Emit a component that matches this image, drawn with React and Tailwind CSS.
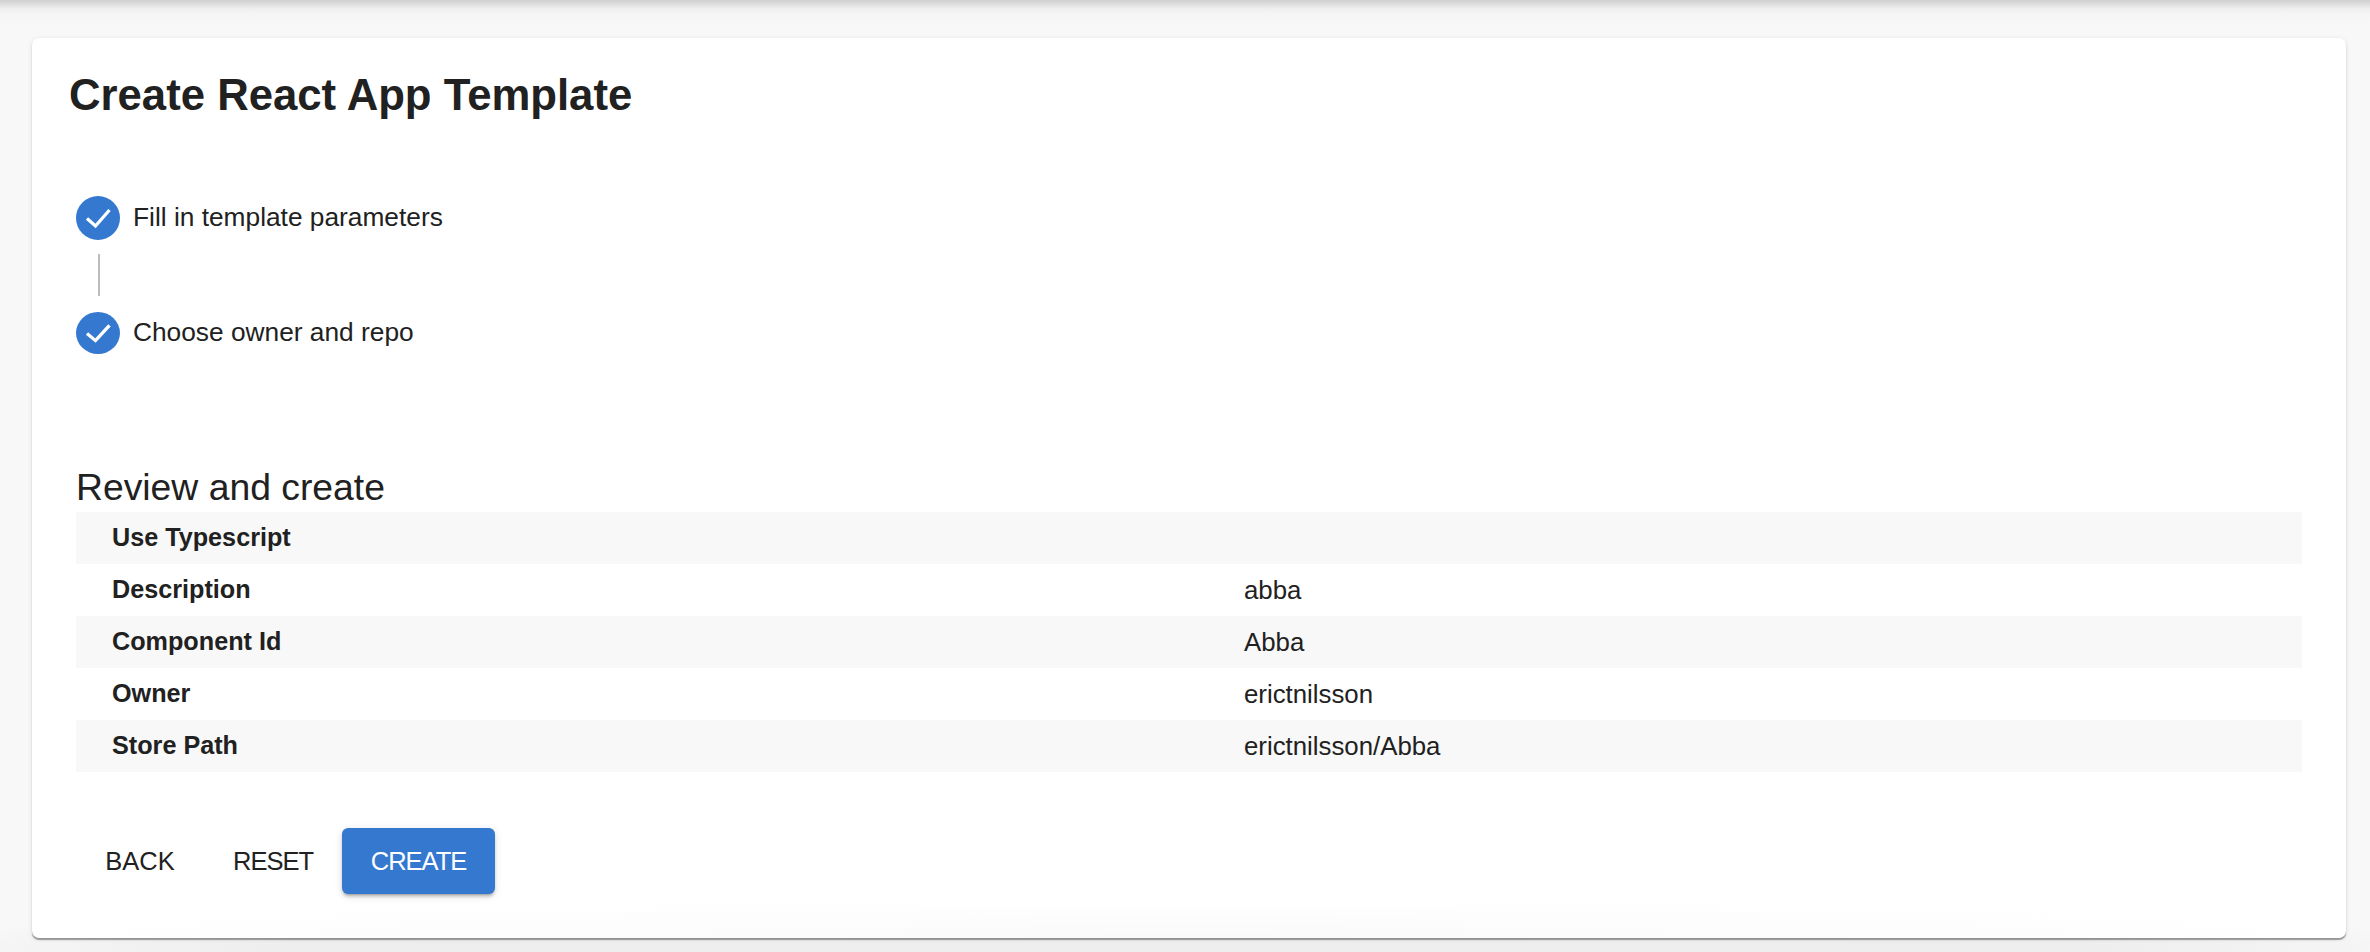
const rows = [
  ['Use Typescript', ''],
  ['Description', 'abba'],
  ['Component Id', 'Abba'],
  ['Owner', 'erictnilsson'],
  ['Store Path', 'erictnilsson/Abba'],
];

const CheckCircle = ({ className }) => (
  <svg className={className} viewBox="0 0 44 44" preserveAspectRatio="none">
    <circle cx="22" cy="22" r="22" fill="#3578d0" />
    <path d="M11 22.5 L19.5 30 L33.5 14" fill="none" stroke="#fff" strokeWidth="3.3" />
  </svg>
);

const Step = ({ label, iconClass }) => (
  <div className="flex items-center gap-[13px]">
    <CheckCircle className={iconClass} />
    <span className="text-[26.3px] text-[#212121]">{label}</span>
  </div>
);

export default function App() {
  return (
    <div className="h-[952px] overflow-hidden bg-[linear-gradient(to_bottom,#cfcfcf_0px,#dedede_4px,#f0f0f0_9px,#f5f5f5_14px,#f8f8f8_24px,transparent_25px),radial-gradient(ellipse_1300px_60px_at_50%_100%,#eeeeee_70%,#f8f8f8_100%)] pl-[32px] pr-[24px] pt-[38px] font-['Liberation_Sans',Arial,sans-serif]">
      <div className="h-[900px] rounded-[7px] bg-white bg-[radial-gradient(ellipse_1250px_40px_at_50%_100%,#fafafa_0%,#ffffff_100%)] shadow-[0_2px_1px_rgba(0,0,0,0.35),0_1px_5px_rgba(0,0,0,0.1)]">
        <div className="px-[37px] pt-[27px]">
          <h1 className="text-[43.7px] leading-[60px] font-bold text-[#212121]">Create React App Template</h1>
        </div>
        <div className="px-[44px] pt-[71px]">
          <Step label="Fill in template parameters" iconClass="h-[44px] w-[44px]" />
          <div className="ml-[22px] mt-[14px] mb-[16px] h-[42px] w-[2px] bg-[#bdbdbd]" />
          <Step label="Choose owner and repo" iconClass="h-[42px] w-[44px]" />
          <h2 className="pt-[108px] text-[37.3px] leading-[50px] text-[#212121]">Review and create</h2>
          <div>
            {rows.map(([name, value], i) => (
              <div key={name} className={`flex h-[52px] items-center text-[#212121] ${i % 2 === 0 ? 'bg-[#f8f8f8]' : 'bg-white'}`}>
                <div className="w-[1168px] pl-[36px] text-[25.2px] font-bold">{name}</div>
                <div className="text-[25.8px]">{value}</div>
              </div>
            ))}
          </div>
          <div className="mt-[56px] flex items-center">
            <button className="h-[66px] w-[128px] text-[25.5px] text-[#212121]">BACK</button>
            <button className="h-[66px] w-[138px] text-[25.5px] tracking-[-1px] text-[#212121]">RESET</button>
            <button className="h-[66px] w-[153px] rounded-[6px] bg-[#3578d0] text-[25.5px] tracking-[-1px] text-white shadow-[0_4px_2px_-3px_rgba(0,0,0,0.2),0_3px_3px_rgba(0,0,0,0.14),0_2px_8px_rgba(0,0,0,0.12)]">CREATE</button>
          </div>
        </div>
      </div>
    </div>
  );
}
